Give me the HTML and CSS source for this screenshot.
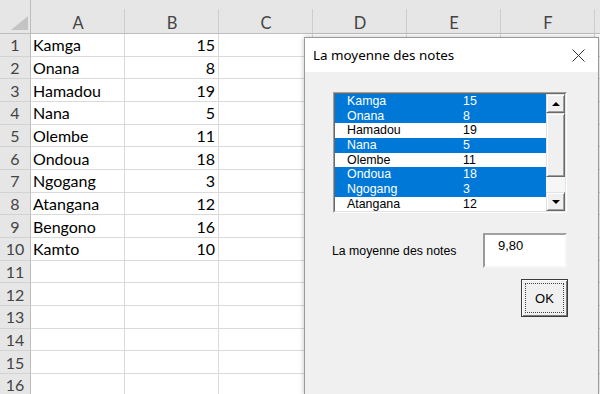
FILE: index.html
```html
<!DOCTYPE html>
<html>
<head>
<meta charset="utf-8">
<link rel="stylesheet" href="styles.css">
</head>
<body>
<div class="sheet">
  <div class="corner"><div class="tri"></div></div>
  <div class="ch">A</div><div class="ch">B</div><div class="ch">C</div><div class="ch">D</div><div class="ch">E</div><div class="ch">F</div><div class="ch last"></div>

  <div class="rh">1</div><div class="c">Kamga</div><div class="c num">15</div><div class="c"></div><div class="c"></div><div class="c"></div><div class="c"></div><div class="c"></div>
  <div class="rh">2</div><div class="c">Onana</div><div class="c num">8</div><div class="c"></div><div class="c"></div><div class="c"></div><div class="c"></div><div class="c"></div>
  <div class="rh">3</div><div class="c">Hamadou</div><div class="c num">19</div><div class="c"></div><div class="c"></div><div class="c"></div><div class="c"></div><div class="c"></div>
  <div class="rh">4</div><div class="c">Nana</div><div class="c num">5</div><div class="c"></div><div class="c"></div><div class="c"></div><div class="c"></div><div class="c"></div>
  <div class="rh">5</div><div class="c">Olembe</div><div class="c num">11</div><div class="c"></div><div class="c"></div><div class="c"></div><div class="c"></div><div class="c"></div>
  <div class="rh">6</div><div class="c">Ondoua</div><div class="c num">18</div><div class="c"></div><div class="c"></div><div class="c"></div><div class="c"></div><div class="c"></div>
  <div class="rh">7</div><div class="c">Ngogang</div><div class="c num">3</div><div class="c"></div><div class="c"></div><div class="c"></div><div class="c"></div><div class="c"></div>
  <div class="rh">8</div><div class="c">Atangana</div><div class="c num">12</div><div class="c"></div><div class="c"></div><div class="c"></div><div class="c"></div><div class="c"></div>
  <div class="rh">9</div><div class="c">Bengono</div><div class="c num">16</div><div class="c"></div><div class="c"></div><div class="c"></div><div class="c"></div><div class="c"></div>
  <div class="rh">10</div><div class="c">Kamto</div><div class="c num">10</div><div class="c"></div><div class="c"></div><div class="c"></div><div class="c"></div><div class="c"></div>
  <div class="rh">11</div><div class="c"></div><div class="c"></div><div class="c"></div><div class="c"></div><div class="c"></div><div class="c"></div><div class="c"></div>
  <div class="rh">12</div><div class="c"></div><div class="c"></div><div class="c"></div><div class="c"></div><div class="c"></div><div class="c"></div><div class="c"></div>
  <div class="rh">13</div><div class="c"></div><div class="c"></div><div class="c"></div><div class="c"></div><div class="c"></div><div class="c"></div><div class="c"></div>
  <div class="rh">14</div><div class="c"></div><div class="c"></div><div class="c"></div><div class="c"></div><div class="c"></div><div class="c"></div><div class="c"></div>
  <div class="rh">15</div><div class="c"></div><div class="c"></div><div class="c"></div><div class="c"></div><div class="c"></div><div class="c"></div><div class="c"></div>
  <div class="rh">16</div><div class="c"></div><div class="c"></div><div class="c"></div><div class="c"></div><div class="c"></div><div class="c"></div><div class="c"></div>
</div>

<div class="dialog">
  <div class="titlebar">
    <span class="title">La moyenne des notes</span>
    <svg class="close" width="13" height="13" viewBox="0 0 13 13"><path d="M0.5 0.5 L12.5 12.5 M12.5 0.5 L0.5 12.5" stroke="#333" stroke-width="1" fill="none"/></svg>
  </div>
  <div class="dbody">
    <div class="listbox">
      <div class="lb-inner">
        <div class="items">
          <div class="item sel"><span class="c1">Kamga</span><span>15</span></div>
          <div class="item sel"><span class="c1">Onana</span><span>8</span></div>
          <div class="item"><span class="c1">Hamadou</span><span>19</span></div>
          <div class="item sel"><span class="c1">Nana</span><span>5</span></div>
          <div class="item"><span class="c1">Olembe</span><span>11</span></div>
          <div class="item sel"><span class="c1">Ondoua</span><span>18</span></div>
          <div class="item sel"><span class="c1">Ngogang</span><span>3</span></div>
          <div class="item"><span class="c1">Atangana</span><span>12</span></div>
        </div>
        <div class="scroll">
          <div class="sbtn"><span class="arr up"></span></div>
          <div class="thumb"></div>
          <div class="track"></div>
          <div class="sbtn"><span class="arr down"></span></div>
        </div>
      </div>
    </div>
    <div class="result-row">
      <span class="lbl">La moyenne des notes</span>
      <div class="textbox">9,80</div>
    </div>
    <div class="btn-row">
      <div class="ok"><span class="focus">OK</span></div>
    </div>
  </div>
</div>
</body>
</html>
```
FILE: styles.css
```css
* { box-sizing: border-box; }
html, body { margin: 0; padding: 0; }
body {
  width: 600px;
  height: 394px;
  overflow: hidden;
  position: relative;
  background: #fff;
  font-family: Lato, "Liberation Sans", sans-serif;
}
.sheet {
  display: grid;
  grid-template-columns: 31px repeat(6, 94px) 1fr;
  grid-template-rows: 34px;
  grid-auto-rows: 22.67px;
  font-size: 16px;
}
.corner {
  background: #e6e6e6;
  border-right: 1px solid #bdbdbd;
  border-bottom: 1px solid #bdbdbd;
  display: flex;
  justify-content: flex-end;
  align-items: flex-end;
  padding: 0 2px 3px 0;
}
.tri {
  width: 17px;
  height: 14px;
  background: #c4c4c4;
  clip-path: polygon(100% 0, 100% 100%, 0 100%);
}
.ch {
  background: #e6e6e6 linear-gradient(#cdcdcd, #cdcdcd) right bottom / 1px 24px no-repeat;
  border-bottom: 1px solid #bdbdbd;
  color: #444;
  font-size: 16.5px;
  display: flex;
  align-items: center;
  justify-content: center;
  padding-top: 12px;
}
.ch.last { background: #e6e6e6; }
.rh {
  background: #e6e6e6;
  border-right: 1px solid #bdbdbd;
  border-bottom: 1px solid #d2d2d2;
  color: #444;
  display: flex;
  align-items: center;
  justify-content: center;
}
.c {
  border-right: 1px solid #dadada;
  border-bottom: 1px solid #dadada;
  display: flex;
  align-items: center;
  padding: 0 3px 0 2px;
  color: #000;
  white-space: nowrap;
}
.c.num { justify-content: flex-end; }

.dialog {
  position: absolute;
  left: 304px;
  top: 37px;
  width: 295px;
  height: 358px;
  border: 1px solid #9a9a9a;
  box-shadow: 0 0 5px rgba(0,0,0,0.25);
  display: flex;
  flex-direction: column;
  background: #f0f0f0;
}
.titlebar {
  height: 34px;
  background: #fff;
  display: flex;
  align-items: center;
  padding: 0 13px 0 8px;
  font-family: "Noto Sans", sans-serif;
  font-size: 13.4px;
  color: #000;
}
.close { margin-left: auto; }
.dbody {
  flex: 1;
  padding: 20px 0 0 28px;
  display: flex;
  flex-direction: column;
  font-family: "Liberation Sans", Arial, sans-serif;
}
.listbox {
  width: 234px;
  height: 121px;
  border: 1px solid;
  border-color: #a0a0a0 #fff #fff #a0a0a0;
}
.lb-inner {
  height: 100%;
  border: 1px solid;
  border-color: #696969 #e3e3e3 #e3e3e3 #696969;
  background: #fff;
  display: flex;
}
.items {
  width: 211px;
  font-size: 12.4px;
  color: #000;
}
.item {
  height: 14.7px;
  line-height: 14.7px;
  display: flex;
  white-space: nowrap;
}
.item.sel { background: #0078d7; color: #fff; }
.c1 { width: 128px; padding-left: 12px; }
.scroll {
  width: 19px;
  display: flex;
  flex-direction: column;
}
.sbtn, .thumb {
  background: #f0f0f0;
  border: 1px solid;
  border-color: #e3e3e3 #696969 #696969 #e3e3e3;
  box-shadow: inset 1px 1px #fff, inset -1px -1px #a0a0a0;
}
.sbtn {
  height: 19px;
  display: flex;
  align-items: center;
  justify-content: center;
}
.thumb { height: 64px; }
.track { flex: 1; background: #f6f6f6; }
.arr {
  width: 0;
  height: 0;
  border-left: 4px solid transparent;
  border-right: 4px solid transparent;
}
.arr.up { border-bottom: 4px solid #000; }
.arr.down { border-top: 4px solid #000; }

.result-row {
  margin-top: 20px;
  width: 234px;
  display: flex;
  align-items: center;
}
.lbl { font-size: 12.3px; color: #000; margin-left: -1px; }
.textbox {
  margin-left: auto;
  width: 84px;
  height: 35px;
  background: #fff;
  border: 2px solid;
  border-color: #a0a0a0 #f6f6f6 #f6f6f6 #9a9a9a;
  font-size: 13px;
  padding: 3px 0 0 13px;
  color: #000;
}
.btn-row {
  margin-top: 11px;
  width: 235px;
  display: flex;
  justify-content: flex-end;
}
.ok {
  width: 47px;
  height: 38px;
  background: #f0f0f0;
  border: 1px solid #3c3c3c;
  box-shadow: inset 1px 1px #fff, inset -1px -1px #7a7a7a;
  padding: 3px 3px 3px 3px;
}
.focus {
  height: 100%;
  border: 1px dotted #444;
  display: flex;
  align-items: center;
  justify-content: center;
  font-size: 13px;
  color: #000;
}
```
